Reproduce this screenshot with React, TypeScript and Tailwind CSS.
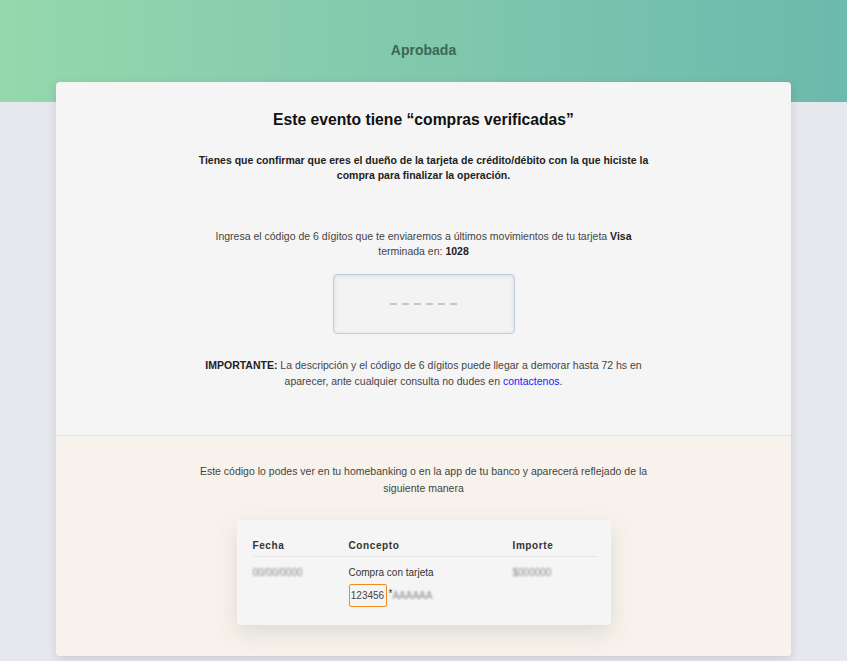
import React from "react";

export default function App() {
  const font = { fontFamily: '"Liberation Sans", Arial, sans-serif' };
  return (
    <div className="min-h-[661px] bg-[#e6e8ed] text-[10.5px]" style={font}>
      <div className="h-[102px] bg-gradient-to-r from-[#95d8ad] to-[#6cb9ad] flex justify-center pt-[41px]">
        <div className="text-[14px] leading-[18px] font-bold text-[#3d6657]">Aprobada</div>
      </div>
      <div className="mx-[56px] -mt-[20px] rounded-[4px] overflow-hidden shadow-[0_3px_10px_rgba(0,0,0,0.12)]">
        <div className="bg-[#f5f5f5] flex flex-col items-center pt-[28px] pb-[46px] border-b border-[#e6e6e6]">
          <h1 className="text-[15.7px] leading-[20px] font-bold text-[#111]">
            Este evento tiene “compras verificadas”
          </h1>
          <p className="mt-[23px] max-w-[460px] text-center leading-[15px] font-bold text-[#222]">
            Tienes que confirmar que eres el dueño de la tarjeta de crédito/débito con la que hiciste la compra para finalizar la operación.
          </p>
          <p className="mt-[46px] max-w-[460px] text-center leading-[15px] text-[#444]">
            Ingresa el código de 6 dígitos que te enviaremos a últimos movimientos de tu tarjeta{" "}
            <b className="text-[#222]">Visa</b> terminada en: <b className="text-[#222]">1028</b>
          </p>
          <div className="mt-[15px] w-[182px] h-[60px] rounded-[4px] border border-[#bfccdb] bg-[#f3f3f3] shadow-[inset_0_1px_4px_rgba(0,0,0,0.1)] flex items-center justify-center gap-[5px]">
            {[0, 1, 2, 3, 4, 5].map((i) => (
              <div key={i} className="w-[7px] h-[2px] bg-[#c6c6c6]" />
            ))}
          </div>
          <p className="mt-[23px] max-w-[460px] text-center leading-[16px] text-[#444]">
            <b className="text-[#222]">IMPORTANTE:</b> La descripción y el código de 6 dígitos puede llegar a demorar hasta 72 hs en aparecer, ante cualquier consulta no dudes en{" "}
            <a className="text-[#1a1aff]">contactenos</a>.
          </p>
        </div>
        <div className="bg-[#f7f3ec] flex flex-col items-center pt-[27px] pb-[31px]">
          <p className="max-w-[460px] text-center leading-[17px] text-[#444]">
            Este código lo podes ver en tu homebanking o en la app de tu banco y aparecerá reflejado de la siguiente manera
          </p>
          <div className="mt-[23px] w-[374px] h-[105px] bg-[#f5f5f5] rounded-[3px] shadow-[0_8px_22px_rgba(90,80,60,0.15)] pt-[20px] pl-[16px] pr-[14px]">
            <div className="grid grid-cols-[96px_164px_1fr] border-b border-[#e4e4e4] pb-[4px] text-[10px] leading-[12px] font-bold tracking-[0.6px] text-[#333]">
              <div>Fecha</div>
              <div>Concepto</div>
              <div>Importe</div>
            </div>
            <div className="grid grid-cols-[96px_164px_1fr] pt-[10px] text-[10px] leading-[12px]">
              <div className="text-[#8a8a8a] blur-[1.2px]">00/00/0000</div>
              <div className="text-[#333]">
                <div>Compra con tarjeta</div>
                <div className="flex items-center mt-[5px]">
                  <span className="inline-flex items-center justify-center w-[38px] h-[23px] rounded-[2px] border border-[#f38a1a] text-[#444]">
                    123456
                  </span>
                  <span className="ml-[2px] -mt-[4px] text-[#333]">*</span>
                  <span className="text-[#8a8a8a] blur-[1.2px]">AAAAAA</span>
                </div>
              </div>
              <div className="text-[#8a8a8a] blur-[1.2px]">$000000</div>
            </div>
          </div>
        </div>
      </div>
    </div>
  );
}
